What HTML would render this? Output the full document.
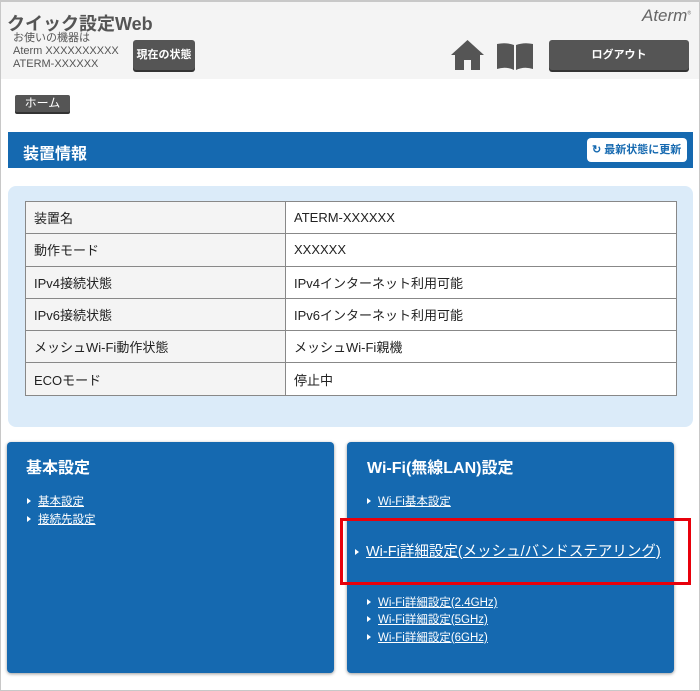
<!DOCTYPE html>
<html><head><meta charset="utf-8"><style>
*{box-sizing:border-box;margin:0;padding:0}
body{width:700px;height:691px;overflow:hidden;background:#fff;font-family:"Liberation Sans","Noto Sans CJK JP",sans-serif;position:relative}
.frame{position:absolute;left:0;top:0;width:700px;height:691px;border:1px solid #c8c8c8;border-top:2px solid #c8c8c8}
.hdr{position:absolute;left:1px;top:2px;width:698px;height:77px;background:#f4f4f4}
.abs{position:absolute}
.btn{position:absolute;background:#555;color:#fff;border-radius:3px;box-shadow:0 2px 0 #333;font-weight:bold;text-align:center}
.bar{position:absolute;left:8px;top:132px;width:685px;height:36px;background:#1569b0}
.panel{position:absolute;left:8px;top:186px;width:685px;height:241px;background:#dbebf9;border-radius:8px}
table{position:absolute;left:25px;top:201px;width:652px;border-collapse:collapse;font-size:13px;color:#222}
td{border:1px solid #888;height:32.3px;padding-left:8px}
td.l{background:#f4f4f4;width:260px}
td.r{background:#fff}
.box{position:absolute;top:442px;width:327px;height:231px;background:#1569b0;border-radius:4px;box-shadow:0 1px 3px #999}
.box h3{position:absolute;left:19px;top:12px;color:#fff;font-size:16px}
.lk{position:absolute;color:#fff;font-size:11.5px;text-decoration:underline;white-space:nowrap}
.lk:before{content:"";display:inline-block;border-left:4px solid #fff;border-top:3px solid transparent;border-bottom:3px solid transparent;margin-right:7px;vertical-align:1px}
</style></head><body>
<div class="hdr"></div>
<div class="abs" style="left:7px;top:10px;font-size:18px;font-weight:bold;color:#555">クイック設定Web</div>
<div class="abs" style="left:13px;top:32px;font-size:11px;color:#555;line-height:13px">お使いの機器は<br>Aterm XXXXXXXXXX<br>ATERM-XXXXXX</div>
<div class="btn" style="left:133px;top:40px;width:62px;height:30px;line-height:30px;font-size:11px">現在の状態</div>
<div class="abs" style="left:642px;top:6px;font-size:17px;font-style:italic;color:#666">Aterm<sup style="font-size:5px">®</sup></div>
<svg class="abs" style="left:450px;top:39px" width="35" height="32" viewBox="0 0 35 32"><path d="M17.5 1 L34 16 L30 16 L30 31 L21 31 L21 21 L14 21 L14 31 L5 31 L5 16 L1 16 Z" fill="#555"/></svg>
<svg class="abs" style="left:496px;top:42px" width="38" height="28" viewBox="0 0 38 28"><path d="M1 2 Q10 0 18 3 L18 28 Q10 24 1 27 Z M20 3 Q28 0 37 2 L37 27 Q28 24 20 28 Z" fill="#555"/></svg>
<div class="btn" style="left:549px;top:40px;width:140px;height:30px;line-height:30px;font-size:11px">ログアウト</div>
<div class="btn" style="left:15px;top:95px;width:55px;height:17px;line-height:17px;font-size:12px;font-weight:normal;border-radius:2px">ホーム</div>
<div class="bar"><div class="abs" style="left:15px;top:8px;color:#fff;font-size:16px;font-weight:bold">装置情報</div>
<div class="abs" style="left:579px;top:6px;width:100px;height:24px;background:#fff;border-radius:4px;color:#1569b0;font-size:11px;line-height:24px;padding-left:5px;font-weight:bold">↻ 最新状態に更新</div></div>
<div class="panel"></div>
<table>
<tr><td class="l">装置名</td><td class="r">ATERM-XXXXXX</td></tr>
<tr><td class="l">動作モード</td><td class="r">XXXXXX</td></tr>
<tr><td class="l">IPv4接続状態</td><td class="r">IPv4インターネット利用可能</td></tr>
<tr><td class="l">IPv6接続状態</td><td class="r">IPv6インターネット利用可能</td></tr>
<tr><td class="l">メッシュWi-Fi動作状態</td><td class="r">メッシュWi-Fi親機</td></tr>
<tr><td class="l">ECOモード</td><td class="r">停止中</td></tr>
</table>
<div class="box" style="left:7px"><h3>基本設定</h3>
<div class="lk" style="left:20px;top:51px">基本設定</div>
<div class="lk" style="left:20px;top:69px">接続先設定</div></div>
<div class="box" style="left:347px"><h3 style="left:20px">Wi-Fi(無線LAN)設定</h3>
<div class="lk" style="left:20px;top:51px">Wi-Fi基本設定</div>
<div class="lk" style="left:20px;top:152px">Wi-Fi詳細設定(2.4GHz)</div>
<div class="lk" style="left:20px;top:169px">Wi-Fi詳細設定(5GHz)</div>
<div class="lk" style="left:20px;top:187px">Wi-Fi詳細設定(6GHz)</div></div>
<div class="abs" style="left:340px;top:518px;width:351px;height:67px;border:3px solid #e8000b"></div>
<div class="lk" style="left:355px;top:540px;font-size:14.5px">Wi-Fi詳細設定(メッシュ/バンドステアリング)</div>
<div class="frame"></div>
</body></html>
